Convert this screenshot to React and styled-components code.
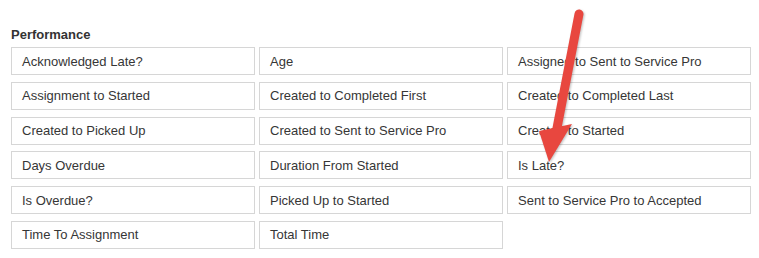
import React from 'react';
import styled, { createGlobalStyle } from 'styled-components';

const GlobalStyle = createGlobalStyle`
  html, body {
    margin: 0;
    padding: 0;
    background: #ffffff;
  }
  body {
    font-family: Arial, "Liberation Sans", sans-serif;
  }
`;

const Page = styled.div`
  position: relative;
  width: 759px;
  height: 258px;
  padding: 27px 0 0 11px;
  box-sizing: border-box;
  overflow: hidden;
`;

const Title = styled.div`
  font-size: 13px;
  font-weight: 700;
  line-height: 16px;
  color: #333333;
  margin-bottom: 4px;
`;

const Grid = styled.div`
  display: grid;
  grid-template-columns: repeat(3, 244px);
  grid-auto-rows: 28px;
  column-gap: 4px;
  row-gap: 6.75px;
`;

const Field = styled.div`
  display: flex;
  align-items: center;
  box-sizing: border-box;
  height: 28px;
  padding: 0 10px;
  border: 1px solid #d6d6d6;
  background: #ffffff;
  font-size: 13px;
  color: #363636;
  white-space: nowrap;
`;

const Annotation = styled.svg`
  position: absolute;
  left: 0;
  top: 0;
  pointer-events: none;
  filter: drop-shadow(1px 1px 1px rgba(0, 0, 0, 0.25));
`;

const fields = [
  'Acknowledged Late?',
  'Age',
  'Assigned to Sent to Service Pro',
  'Assignment to Started',
  'Created to Completed First',
  'Created to Completed Last',
  'Created to Picked Up',
  'Created to Sent to Service Pro',
  'Created to Started',
  'Days Overdue',
  'Duration From Started',
  'Is Late?',
  'Is Overdue?',
  'Picked Up to Started',
  'Sent to Service Pro to Accepted',
  'Time To Assignment',
  'Total Time',
];

const App = () => {
  return (
    <Page>
      <GlobalStyle />
      <Title>Performance</Title>
      <Grid>
        {fields.map((f) => (
          <Field key={f}>{f}</Field>
        ))}
      </Grid>
      <Annotation width="759" height="258" viewBox="0 0 759 258">
        <line x1="579" y1="14" x2="557" y2="128" stroke="#e8473f" strokeWidth="9" strokeLinecap="round" />
        <polygon points="539,131 572,124 549,162" fill="#e8473f" />
      </Annotation>
    </Page>
  );
};

export default App;
